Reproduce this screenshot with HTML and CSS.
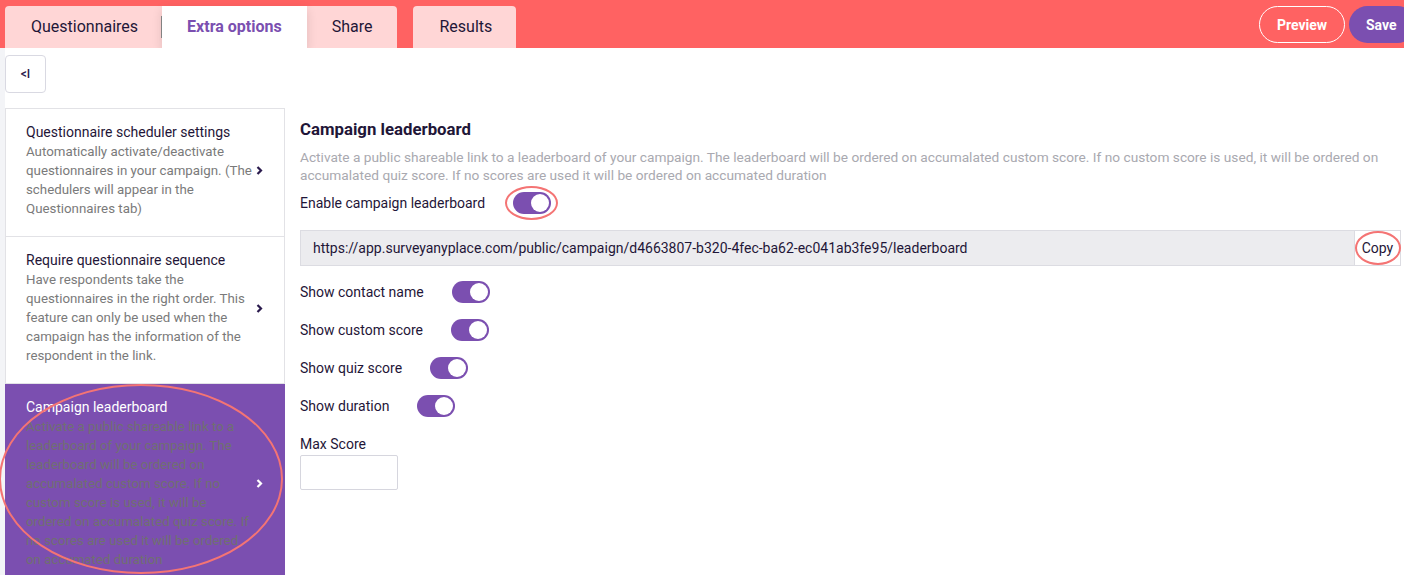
FILE: index.html
```html
<!DOCTYPE html>
<html>
<head>
<meta charset="utf-8">
<link rel="stylesheet" href="styles.css">
</head>
<body>
<header class="topbar">
  <nav class="tabs">
    <div class="tab-group">
      <div class="tab tab-first">Questionnaires</div>
      <div class="tab tab-active">Extra options</div>
      <div class="tab tab-last">Share</div>
    </div>
    <div class="tab tab-single">Results</div>
  </nav>
  <div class="actions">
    <button class="btn-preview">Preview</button>
    <button class="btn-save">Save</button>
  </div>
</header>
<main class="main">
  <button class="collapse">&lt;I</button>
  <div class="layout">
    <aside class="sidebar">
      <div class="item">
        <div class="item-text">
          <div class="item-title">Questionnaire scheduler settings</div>
          <div class="item-desc">Automatically activate/deactivate questionnaires in your campaign. (The schedulers will appear in the Questionnaires tab)</div>
        </div>
        <svg class="chev" width="7" height="9" viewBox="0 0 7 9"><path d="M1.5 1 L5 4.5 L1.5 8" fill="none" stroke="currentColor" stroke-width="2.2"/></svg>
      </div>
      <div class="item">
        <div class="item-text">
          <div class="item-title">Require questionnaire sequence</div>
          <div class="item-desc">Have respondents take the questionnaires in the right order. This feature can only be used when the campaign has the information of the respondent in the link.</div>
        </div>
        <svg class="chev" width="7" height="9" viewBox="0 0 7 9"><path d="M1.5 1 L5 4.5 L1.5 8" fill="none" stroke="currentColor" stroke-width="2.2"/></svg>
      </div>
      <div class="item item-active">
        <div class="item-text">
          <div class="item-title">Campaign leaderboard</div>
          <div class="item-desc">Activate a public shareable link to a leaderboard of your campaign. The leaderboard will be ordered on accumalated custom score. If no custom score is used, it will be ordered on accumalated quiz score. If no scores are used it will be ordered on accumated duration</div>
        </div>
        <svg class="chev" width="7" height="9" viewBox="0 0 7 9"><path d="M1.5 1 L5 4.5 L1.5 8" fill="none" stroke="currentColor" stroke-width="2.2"/></svg>
        <span class="mark mark-side"></span>
      </div>
    </aside>
    <section class="content">
      <h2 class="heading">Campaign leaderboard</h2>
      <p class="desc">Activate a public shareable link to a leaderboard of your campaign. The leaderboard will be ordered on accumalated custom score. If no custom score is used, it will be ordered on accumalated quiz score. If no scores are used it will be ordered on accumated duration</p>
      <div class="row row-enable">
        <span class="label">Enable campaign leaderboard</span>
        <span class="toggle-wrap"><span class="toggle"></span><span class="mark mark-toggle"></span></span>
      </div>
      <div class="url">
        <span class="url-text">https://app.surveyanyplace.com/public/campaign/d4663807-b320-4fec-ba62-ec041ab3fe95/leaderboard</span>
        <span class="copy">Copy<span class="mark mark-copy"></span></span>
      </div>
      <div class="row row-first">
        <span class="label">Show contact name</span>
        <span class="toggle"></span>
      </div>
      <div class="row">
        <span class="label">Show custom score</span>
        <span class="toggle"></span>
      </div>
      <div class="row">
        <span class="label">Show quiz score</span>
        <span class="toggle"></span>
      </div>
      <div class="row">
        <span class="label">Show duration</span>
        <span class="toggle"></span>
      </div>
      <div class="field-label">Max Score</div>
      <div class="input"></div>
    </section>
  </div>
</main>
</body>
</html>
```

FILE: styles.css
```css
* { box-sizing: border-box; }
html, body { margin: 0; padding: 0; }
body {
  font-family: Roboto, "Liberation Sans", sans-serif;
  color: #1f1638;
  background: #fff;
  width: 1404px;
  height: 575px;
  overflow: hidden;
}
.topbar {
  height: 48px;
  background: #ff6262;
  display: flex;
  justify-content: space-between;
  align-items: flex-start;
  overflow: hidden;
}
.tabs {
  display: flex;
  align-items: flex-end;
  gap: 16px;
  padding-left: 5px;
  height: 48px;
}
.tab-group { display: flex; }
.tab {
  height: 42px;
  background: #ffd6d6;
  font-size: 16px;
  line-height: 42px;
  color: #1f1638;
  padding: 0 25px;
  position: relative;
}
.tab-first { border-radius: 4px 0 0 0; padding-left: 26px; padding-right: 24px; }
.tab-first::after {
  content: "";
  position: absolute;
  right: 0;
  top: 10px;
  height: 22px;
  border-right: 1px solid #8a8a8a;
}
.tab-last { border-radius: 0 4px 0 0; }
.tab-single { border-radius: 4px 4px 0 0; padding: 0 24px 0 26px; }
.tab-active {
  background: #fff;
  color: #7b4fb0;
  font-weight: 700;
  padding: 0 25px 0 25px;
  box-shadow: 0 4px 10px rgba(0,0,0,0.12);
  z-index: 1;
}
.actions {
  display: flex;
  gap: 4px;
  padding-top: 6px;
  margin-right: -12px;
}
.actions button {
  font-family: Roboto, "Liberation Sans", sans-serif;
  font-size: 14px;
  font-weight: 700;
  color: #fff;
  height: 37px;
  border-radius: 19px;
  cursor: pointer;
}
.btn-preview {
  width: 86px;
  background: transparent;
  border: 1px solid #fff;
}
.btn-save {
  width: 67px;
  background: #7b4fb0;
  border: none;
  text-align: left;
  padding: 0 0 0 17px;
}
.main {
  border-left: 5px solid #f3f4f7;
  height: 527px;
  padding-top: 7px;
}
.collapse {
  display: block;
  width: 41px;
  height: 38px;
  background: #fff;
  border: 1px solid #d9d9e2;
  border-radius: 4px;
  font-family: Roboto, "Liberation Sans", sans-serif;
  font-size: 12px;
  font-weight: 500;
  color: #2a1a4d;
  letter-spacing: 0;
  padding: 0;
}
.layout {
  display: flex;
  margin-top: 15px;
  gap: 15px;
}
.sidebar {
  width: 280px;
  flex: 0 0 280px;
  border: 1px solid #e2e2e6;
  border-bottom: none;
  height: 470px;
}
.item {
  display: flex;
  align-items: center;
  padding: 14px 0 18px 20px;
  border-bottom: 1px solid #e2e2e6;
  position: relative;
}
.item-text { flex: 0 0 227px; }
.item-title {
  font-size: 14px;
  line-height: 19px;
  color: #1f1638;
}
.item-desc {
  font-size: 13.3px;
  line-height: 19px;
  color: #7a7a7a;
}
.chev { margin-left: 3px; color: #2a1a4d; }
.item-active {
  background: #7b4fb0;
  margin: 0 -1px;
  padding-top: 14px;
  padding-left: 21px;
  padding-bottom: 40px;
  border-bottom: none;
}
.item-active .item-title { color: #fff; }
.item-active .item-desc { color: #707070; }
.item-active .chev { color: #fff; }
.mark {
  position: absolute;
  border: 2px solid #f47474;
  border-radius: 50%;
  pointer-events: none;
}
.mark-side { left: -6px; top: 0; width: 284px; height: 190px; }
.content {
  flex: 1;
  padding: 11px 3px 0 0;
}
.heading {
  margin: 0;
  font-size: 16.8px;
  line-height: 20px;
  font-weight: 700;
  color: #1f1638;
}
.desc {
  margin: 9px 0 0;
  font-size: 13.7px;
  line-height: 18px;
  color: #a9a9b0;
}
.row {
  display: flex;
  align-items: center;
  height: 22px;
  margin-top: 16px;
  gap: 28px;
}
.row-enable { margin-top: 8px; }
.row-first { margin-top: 15px; }
.label { font-size: 14px; line-height: 17px; color: #1f1638; }
.toggle-wrap { position: relative; display: inline-flex; }
.toggle {
  display: inline-block;
  width: 38px;
  height: 22px;
  background: #7b4fb0;
  border-radius: 11px;
  position: relative;
}
.toggle::after {
  content: "";
  position: absolute;
  right: 2px;
  top: 2px;
  width: 18px;
  height: 18px;
  border-radius: 50%;
  background: #fff;
}
.mark-toggle { left: -8px; top: -6px; width: 53px; height: 34px; }
.url {
  margin-top: 16px;
  height: 36px;
  display: flex;
  align-items: stretch;
  background: #ececef;
  border: 1px solid #dcdce2;
}
.url-text {
  flex: 1;
  font-size: 14px;
  line-height: 34px;
  padding-left: 12px;
  color: #1f1638;
}
.copy {
  position: relative;
  width: 46px;
  background: #fff;
  border-left: 1px solid #dcdce2;
  font-size: 14px;
  line-height: 34px;
  text-align: center;
  color: #1f1638;
}
.mark-copy { left: 0; top: 0; width: 46px; height: 34px; }
.field-label {
  margin-top: 19px;
  font-size: 14px;
  line-height: 17px;
  color: #1f1638;
}
.input {
  margin-top: 2px;
  width: 98px;
  height: 35px;
  border: 1px solid #d6d6de;
  border-radius: 2px;
  background: #fff;
}
```
